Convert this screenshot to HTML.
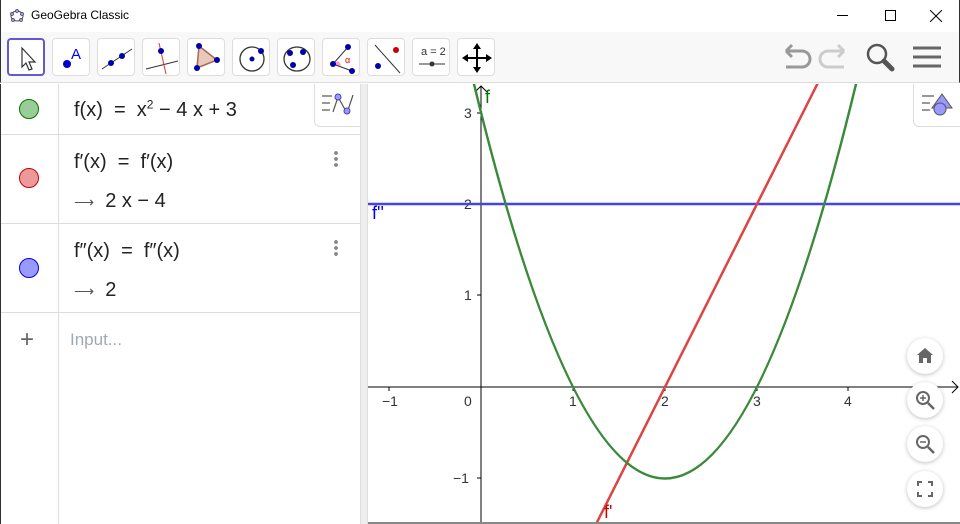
<!DOCTYPE html>
<html><head><meta charset="utf-8">
<style>
*{margin:0;padding:0;box-sizing:border-box}
html,body{width:960px;height:524px;overflow:hidden}
body{background:#fff;font-family:"Liberation Sans",sans-serif;position:relative}
.abs{position:absolute}
.tb{left:0;top:0;width:960px;height:32px;background:#fff;border-left:1px solid #333;border-right:1px solid #333}
.tool{position:absolute;top:38px;width:38px;height:38px;border:1px solid #ddd;border-radius:4px;background:#fff}
.row{position:absolute;left:1px;width:359px;border-bottom:1px solid #ddd}
.dot{position:absolute;left:19px;width:20px;height:20px;border-radius:50%}
.math{position:absolute;left:74px;font-size:20px;color:#222;line-height:24px}
.res{position:absolute;left:74px;font-size:20px;color:#222;line-height:24px}
.zb{position:absolute;left:907px;width:36px;height:36px;border-radius:50%;background:#fff;box-shadow:0 1px 4px rgba(0,0,0,.25)}
</style></head><body>
<div class="abs tb">
<svg class="abs" style="left:8px;top:8px" width="16" height="16" viewBox="0 0 16 16"><ellipse cx="8" cy="8" rx="6" ry="5" fill="none" stroke="#555" stroke-width="1"/><g fill="#99f" stroke="#333" stroke-width=".6"><circle cx="3" cy="6" r="1.6"/><circle cx="8" cy="3" r="1.6"/><circle cx="13" cy="6" r="1.6"/><circle cx="12" cy="12" r="1.6"/><circle cx="4" cy="12" r="1.6"/></g></svg>
<div class="abs" style="left:30px;top:8px;font-size:12px;color:#000">GeoGebra Classic</div>
<div class="abs" style="left:836px;top:15px;width:11px;height:1px;background:#000"></div>
<div class="abs" style="left:884px;top:10px;width:11px;height:11px;border:1px solid #000"></div>
<svg class="abs" style="left:929px;top:10px" width="12" height="12"><path d="M0 0L12 12M12 0L0 12" stroke="#000"/></svg>
</div>
<div class="abs" style="left:0;top:32px;width:960px;height:51px;background:#f8f8f8;border-left:1px solid #333;border-right:1px solid #333;border-bottom:1px solid #ddd"></div>
<div class="tool" style="left:7px;border:2px solid #6557d2"><svg width="36" height="36"><path d="M13 8L13 27L17 23L20 30L23 29L20 22L26 22Z" fill="#fff" stroke="#333" stroke-width="1.2"/></svg></div>
<div class="tool" style="left:52px"><svg width="38" height="38"><circle cx="14" cy="25" r="4" fill="#00c"/><text x="18" y="20" font-size="15" fill="#00f" font-family="Liberation Sans">A</text></svg></div>
<div class="tool" style="left:97px"><svg width="38" height="38"><path d="M4 30L34 10" stroke="#333"/><circle cx="13" cy="24" r="3" fill="#00a"/><circle cx="24" cy="17" r="3" fill="#00a"/></svg></div>
<div class="tool" style="left:142px"><svg width="38" height="38"><path d="M3 30L35 22" stroke="#333"/><path d="M16 4L23 35" stroke="#e33"/><circle cx="18" cy="12" r="3" fill="#00a"/></svg></div>
<div class="tool" style="left:187px"><svg width="38" height="38"><path d="M11 7L29 21L9 29Z" fill="#e8c8b8" stroke="#a65" stroke-width="1.5"/><circle cx="11" cy="7" r="3" fill="#00a"/><circle cx="29" cy="21" r="3" fill="#00a"/><circle cx="9" cy="29" r="3" fill="#00a"/></svg></div>
<div class="tool" style="left:232px"><svg width="38" height="38"><circle cx="19" cy="20" r="12" fill="none" stroke="#333" stroke-width="1.3"/><circle cx="19" cy="20" r="2.5" fill="#00a"/><circle cx="28" cy="12" r="3" fill="#00a"/></svg></div>
<div class="tool" style="left:277px"><svg width="38" height="38"><ellipse cx="19" cy="20" rx="13" ry="12" fill="none" stroke="#333" stroke-width="1.3"/><circle cx="12" cy="14" r="3" fill="#00a"/><circle cx="25" cy="13" r="3" fill="#00a"/><circle cx="15" cy="26" r="3" fill="#00a"/></svg></div>
<div class="tool" style="left:322px"><svg width="38" height="38"><path d="M10 25L15 22A8 8 0 0 1 18 27Z" fill="#f9c"/><path d="M25 8L10 25L29 32" fill="none" stroke="#333"/><circle cx="25" cy="8" r="3" fill="#00a"/><circle cx="10" cy="25" r="3" fill="#00a"/><circle cx="29" cy="32" r="3" fill="#00a"/><text x="22" y="24" font-size="9" fill="#e00">α</text></svg></div>
<div class="tool" style="left:367px"><svg width="38" height="38"><path d="M7 6L32 34" stroke="#333"/><circle cx="28" cy="11" r="3" fill="#c00"/><circle cx="10" cy="27" r="3" fill="#00a"/></svg></div>
<div class="tool" style="left:412px"><svg width="38" height="38"><text x="8" y="16" font-size="11" fill="#333" font-family="Liberation Sans">a = 2</text><path d="M6 25L32 25" stroke="#333"/><circle cx="19" cy="25" r="2.5" fill="#333"/></svg></div>
<div class="tool" style="left:457px"><svg width="38" height="38"><path d="M19 6L19 32M6 19L32 19" stroke="#000" stroke-width="2"/><path d="M19 4L15 10L23 10ZM19 34L15 28L23 28ZM4 19L10 15L10 23ZM34 19L28 15L28 23Z" fill="#000"/></svg></div>
<svg class="abs" style="left:780px;top:42px" width="70" height="30"><path d="M6 9L22 9A8 8 0 0 1 22 25L6 25M6 9L12 3M6 9L12 15" fill="none" stroke="#999" stroke-width="3"/><path d="M64 9L48 9A8 8 0 0 0 48 25L64 25M64 9L58 3M64 9L58 15" fill="none" stroke="#ccc" stroke-width="3"/></svg>
<svg class="abs" style="left:864px;top:42px" width="32" height="32"><circle cx="13" cy="12" r="9" fill="none" stroke="#555" stroke-width="2.5"/><path d="M20 19L28 27" stroke="#555" stroke-width="5" stroke-linecap="round"/></svg>
<svg class="abs" style="left:912px;top:45px" width="30" height="25"><path d="M1 3H29M1 12H29M1 21H29" stroke="#666" stroke-width="3"/></svg>
<!-- algebra -->
<div class="abs" style="left:0;top:84px;width:1px;height:440px;background:#333"></div>
<div class="abs" style="left:58px;top:84px;width:1px;height:440px;background:#ddd"></div>
<div class="row" style="top:84px;height:51px"></div>
<div class="row" style="top:134px;height:90px"></div>
<div class="row" style="top:223px;height:90px"></div>
<div class="dot" style="top:99px;background:#9c9;border:1px solid #070"></div>
<div class="math" style="top:98px">f(x) &nbsp;= &nbsp;x<sup style="font-size:12px;line-height:0">2</sup> − 4 x + 3</div>
<div class="dot" style="top:168px;background:#e99;border:1px solid #c00"></div>
<div class="math" style="top:150px">f′(x) &nbsp;= &nbsp;f′(x)</div>
<div class="res" style="top:189px"><span style="font-size:14px;color:#555">⟶</span> &nbsp;2 x − 4</div>
<div class="dot" style="top:258px;background:#99f;border:1px solid #00e"></div>
<div class="math" style="top:239px">f″(x) &nbsp;= &nbsp;f″(x)</div>
<div class="res" style="top:278px"><span style="font-size:14px;color:#555">⟶</span> &nbsp;2</div>
<div class="abs" style="left:334px;top:150px;width:4px;height:18px;background:radial-gradient(circle,#888 1.8px,transparent 2px) 0 0/4px 6px repeat-y"></div>
<div class="abs" style="left:334px;top:239px;width:4px;height:18px;background:radial-gradient(circle,#888 1.8px,transparent 2px) 0 0/4px 6px repeat-y"></div>
<div class="abs" style="left:20px;top:326px;font-size:24px;color:#666;font-weight:300">+</div>
<div class="abs" style="left:70px;top:330px;font-size:17px;color:#a0aab0">Input...</div>
<div class="abs" style="left:314px;top:84px;width:46px;height:43px;background:#fff;border:1px solid #ddd;border-top:none;border-right:none;border-radius:0 0 0 6px"></div>
<svg class="abs" style="left:320px;top:90px" width="38" height="30"><path d="M2 6H12M2 13H10M2 20H10" stroke="#999" stroke-width="2"/><path d="M13 22L18 7L27 23L33 5" fill="none" stroke="#555" stroke-width="1.2"/><circle cx="18" cy="7" r="3" fill="#99f" stroke="#44a"/><circle cx="27" cy="21" r="3" fill="#99f" stroke="#44a"/></svg>
<div class="abs" style="left:360px;top:84px;width:8px;height:440px;background:#eee;border-left:1px solid #ddd;border-right:1px solid #ddd"></div>
<!-- graph -->
<svg class="abs" style="left:368px;top:84px" width="592" height="440" viewBox="368 84 592 440">
<path d="M368 387H958M952 381L958 387L952 393" fill="none" stroke="#000" stroke-width="1"/>
<path d="M481 524V86M475 92L481 86L487 92" fill="none" stroke="#000" stroke-width="1"/>
<g stroke="#000"><path d="M389 387v4M573 387v4M665 387v4M757 387v4M848 387v4M481 478h-4M481 295h-4M481 204h-4M481 113h-4"/></g>
<g font-size="14" fill="#333" font-family="Liberation Sans"><text x="382" y="406">−1</text><text x="464" y="406">0</text><text x="569" y="406">1</text><text x="661" y="406">2</text><text x="753" y="406">3</text><text x="844" y="406">4</text>
<text x="464" y="118">3</text><text x="464" y="209">2</text><text x="464" y="300">1</text><text x="453" y="483">−1</text></g>
<path d="M368 204H960" stroke="#4444ee" stroke-width="2.5"/>
<path d="M527 661.5L849 21" stroke="#d44" stroke-width="2.5"/>
<path d="M435 -93.4Q665 1050.4 895 -93.4" fill="none" stroke="#3a8a3a" stroke-width="2.5"/>
<text x="485" y="103" font-size="18" fill="#070" font-family="Liberation Sans">f</text>
<text x="604" y="518" font-size="18" fill="#c00" font-family="Liberation Sans">f'</text>
<text x="372" y="219" font-size="18" fill="#00e" font-family="Liberation Sans">f''</text>
<line x1="368" y1="523" x2="960" y2="523" stroke="#888" stroke-width="2"/>
</svg>
<div class="abs" style="left:913px;top:84px;width:47px;height:43px;background:#fff;border:1px solid #ddd;border-top:none;border-right:none;border-radius:0 0 0 6px"></div>
<svg class="abs" style="left:920px;top:92px" width="36" height="28"><path d="M2 4H14M2 11H10M2 18H10" stroke="#999" stroke-width="2"/><path d="M22 2L32 16H12Z" fill="#99f" stroke="#555"/><circle cx="20" cy="17" r="6" fill="#99f" stroke="#555"/></svg>
<div class="zb" style="top:338px"><svg width="36" height="36"><path d="M18 10L10 17H12V25H16V20H20V25H24V17H26Z" fill="#666"/></svg></div>
<div class="zb" style="top:382px"><svg width="36" height="36"><circle cx="16" cy="16" r="6" fill="none" stroke="#666" stroke-width="2"/><path d="M21 21L27 27" stroke="#666" stroke-width="2.5"/><path d="M13 16H19M16 13V19" stroke="#666" stroke-width="1.5"/></svg></div>
<div class="zb" style="top:426px"><svg width="36" height="36"><circle cx="16" cy="16" r="6" fill="none" stroke="#666" stroke-width="2"/><path d="M21 21L27 27" stroke="#666" stroke-width="2.5"/><path d="M13 16H19" stroke="#666" stroke-width="1.5"/></svg></div>
<div class="zb" style="top:471px"><svg width="36" height="36"><path d="M11 15V11H15M21 11H25V15M25 21V25H21M15 25H11V21" fill="none" stroke="#666" stroke-width="2"/></svg></div>
</body></html>
